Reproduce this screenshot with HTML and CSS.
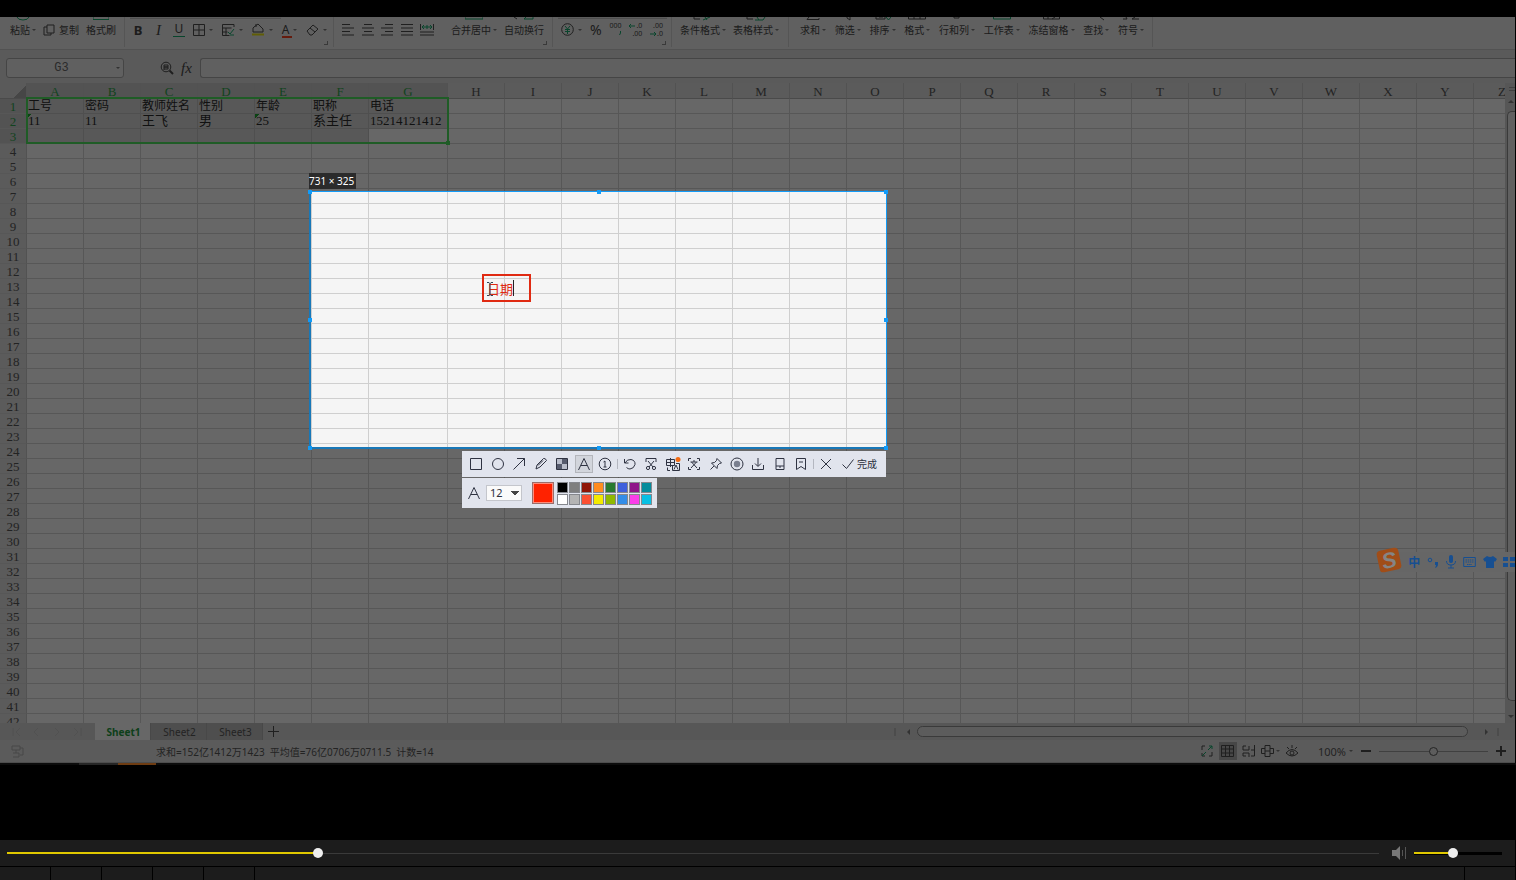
FILE: index.html
```html
<!DOCTYPE html>
<html lang="zh-CN">
<head>
<meta charset="utf-8">
<title>Sheet1</title>
<link rel="stylesheet" href="styles.css">
</head>
<body>
<main class="app">
  <header class="ribbon">
    <div class="group g-clip">
      <button class="tool"><svg class="cut" width="14" height="4"><path d="M1 0q1 3 6 3t6-3" class="gr"/></svg><span class="label caret">粘贴</span></button>
      <button class="tool copy"><svg width="12" height="12"><path d="M4 1h7v8H4zM4 3H1v8h7V9"/></svg><span class="label">复制</span></button>
      <button class="tool"><svg class="cut" width="16" height="4"><path d="M0 0v2.500h16V0" class="gr"/></svg><span class="label">格式刷</span></button>
    </div>
    <div class="group g-font">
      <div class="combo"></div>
      <div class="icons">
        <button class="ic b">B</button>
        <button class="ic i">I</button>
        <button class="ic u">U</button>
        <button class="ic caret" aria-label="边框"><svg width="12" height="12"><path d="M.5.5h11v11H.5zM6 0v12M0 6h12"/></svg></button>
        <button class="ic caret" aria-label="表格样式"><svg width="13" height="12"><path d="M12 3V.500H.5v11h7M.5 4h9M.5 8h5M4 4v7"/><path d="M6 8l2 2 4-5M8 11h4" class="gr"/></svg></button>
        <button class="ic caret" aria-label="填充"><svg width="14" height="13"><path d="M3 4l4-3 5 5v3H2V5zM5 1v3"/><path d="M1 11.500h12" stroke="#e6e010" stroke-width="2"/></svg></button>
        <button class="ic caret a">A</button>
        <button class="ic caret" aria-label="清除"><svg width="13" height="12"><path d="M1 7l6-6 5 4-6 6H4zM4 4l5 4"/></svg></button>
      </div>
      <i class="corner"></i>
    </div>
    <div class="group g-align">
      <div class="icons">
        <button class="ic" aria-label="左对齐"><svg width="12" height="12"><path d="M0 .5h8M0 4h12M0 7.500h8M0 11h12"/></svg></button>
        <button class="ic" aria-label="居中"><svg width="12" height="12"><path d="M2 .5h8M0 4h12M2 7.500h8M0 11h12"/></svg></button>
        <button class="ic" aria-label="右对齐"><svg width="12" height="12"><path d="M4 .5h8M0 4h12M4 7.500h8M0 11h12"/></svg></button>
        <button class="ic" aria-label="两端对齐"><svg width="12" height="12"><path d="M0 .5h12M0 4h12M0 7.500h12M0 11h12"/></svg></button>
        <button class="ic" aria-label="分散对齐"><svg width="14" height="12"><path d="M.5 0v6M13.500 0v6M0 8h14M0 11h14"/><path d="M2 3h10M4 1L2 3l2 2M10 1l2 2-2 2M7 1v4" class="gr"/></svg></button>
      </div>
      <button class="tool"><svg class="cut" width="18" height="4"><path d="M0 0v2h18V0" class="gr"/></svg><span class="label caret">合并居中</span></button>
      <button class="tool"><svg class="cut" width="20" height="4"><path d="M0 0l3 2"/><path d="M10 2h9V0M12 0l-2 2" class="gr"/></svg><span class="label">自动换行</span></button>
      <i class="corner"></i>
    </div>
    <div class="group g-num">
      <div class="combo"></div>
      <div class="icons">
        <button class="ic caret" aria-label="货币"><svg width="13" height="13"><circle cx="6.500" cy="6.500" r="5.800"/><path d="M4 3l2.500 3L9 3M6.500 6v5M4 6.500h5M4 8.500h5" class="gr"/></svg></button>
        <button class="ic pct">%</button>
        <button class="ic dec"><span>000</span><svg width="4" height="7"><path d="M2.500 1v2l-1 2" class="gr"/></svg></button>
        <button class="ic dec"><span class="row"><svg width="6" height="6"><path d="M0 3h6M2 1L0 3l2 2" class="gr"/></svg>.0</span><span>.00</span></button>
        <button class="ic dec"><span>.00</span><span class="row"><svg width="6" height="6"><path d="M0 3h6M4 1l2 2-2 2" class="gr"/></svg>.0</span></button>
      </div>
      <i class="corner"></i>
    </div>
    <div class="group g-style">
      <button class="tool"><svg class="cut" width="20" height="4"><path d="M1 0v2h6"/><path d="M10 3l7-3M12 0l2 3" class="gr"/></svg><span class="label caret">条件格式</span></button>
      <button class="tool"><svg class="cut" width="20" height="4"><path d="M1 0v2h6"/><path d="M9 3h8l2-3M11 0l2 3" class="gr"/></svg><span class="label caret">表格样式</span></button>
    </div>
    <div class="group g-edit">
      <button class="tool"><svg class="cut" width="14" height="4"><path d="M3 0L1 2.500h12V1"/></svg><span class="label caret">求和</span></button>
      <button class="tool"><svg class="cut" width="14" height="4"><path d="M6 0v1l3 2V0"/></svg><span class="label caret">筛选</span></button>
      <button class="tool"><svg class="cut" width="16" height="4"><path d="M1 0v2h9V0M4 0h4"/><path d="M11 0l2.500 3L16 0" class="gr"/></svg><span class="label caret">排序</span></button>
      <button class="tool"><svg class="cut" width="18" height="4"><path d="M.5 0v2h17V0M6 0v2M12 0v2"/></svg><span class="label caret">格式</span></button>
      <button class="tool"><svg class="cut" width="14" height="4"><path d="M4 0v1h5V0"/></svg><span class="label caret">行和列</span></button>
      <button class="tool"><svg class="cut" width="18" height="4"><path d="M.5 0v2h17V0" class="gr"/></svg><span class="label caret">工作表</span></button>
      <button class="tool"><svg class="cut" width="18" height="4"><path d="M.5 0v2h16V0M5 0v2M12 0L9 2"/></svg><span class="label caret">冻结窗格</span></button>
      <button class="tool"><svg class="cut" width="20" height="4"><path d="M14 0l4 3"/></svg><span class="label caret">查找</span></button>
      <button class="tool"><svg class="cut" width="18" height="4"><path d="M1 2h4l-1-2M10 2h7M13 0l-3 2"/></svg><span class="label caret">符号</span></button>
    </div>
  </header>

  <div class="formula">
    <div class="namebox"><input class="name" aria-label="名称框" value="G3"></div>
    <svg class="find" width="14" height="14"><circle cx="6" cy="6" r="4.800"/><path d="M9.500 9.500L13 13" stroke-width="2"/><path d="M4 9V4h4v2H4h4v2H4"/></svg>
    <span class="fx">fx</span>
    <input class="fbar" aria-label="编辑栏">
  </div>

  <div class="sheet">
    <div class="grid">
      <table id="cells"></table>
      <div class="picked"></div>
    </div>
    <div class="vscroll"><span class="split"></span><span class="up"></span><span class="vthumb"></span><span class="down"></span></div>
  </div>

  <nav class="tabs">
    <svg class="navs" width="72" height="10"><path d="M1 1v8M8 1L4 5l4 4M26 1l-4 4 4 4M43 1l4 4-4 4M62 1l4 4-4 4M69 1v8"/></svg>
    <button class="tab on">Sheet1</button><button class="tab">Sheet2</button><button class="tab">Sheet3</button>
    <button class="add" aria-label="新建工作表"><svg width="11" height="11"><path d="M5.500 0v11M0 5.500h11"/></svg></button>
    <div class="hscroll"><i class="bar"></i><i class="lt"></i><span class="hthumb"></span><i class="rt"></i><i class="bar"></i></div>
  </nav>

  <footer class="status">
    <svg class="rec" width="14" height="13"><path d="M1 1h8v4H1zM5 5v3M2 8h6v4H2M9 3h3v7H9"/></svg>
    <span class="sum">求和=152亿1412万1423&nbsp; 平均值=76亿0706万0711.5&nbsp; 计数=14</span>
    <div class="views">
      <button class="view" aria-label="全屏"><svg width="12" height="12"><path d="M1 5V1h3M11 7v4H8M1 8v3h3"/><path d="M7 5l4-4M8 1h3v3M5 7l-4 4" class="gr"/></svg></button>
      <button class="view cur" aria-label="普通"><svg width="13" height="12"><path d="M.5.5h12v11H.5zM0 4h13M0 8h13M4.500 0v12M8.500 0v12"/></svg></button>
      <button class="view" aria-label="分页"><svg width="14" height="12"><path d="M1 1v4h6V1M1 1h3M12.500 0v11H9M1 11V8h6v4M9 5h4M1 11h3"/></svg></button>
      <button class="view caret" aria-label="阅读"><svg width="13" height="12"><path d="M4 .5h5v11H4zM4 3.500H.5v5H4M9 3.500h3.500v5H9M4 6h5"/></svg></button>
      <button class="view" aria-label="护眼"><svg width="14" height="12"><path d="M1 8q6-7 12 0-6 6-12 0M2 2l2 2M7 0v3M12 2l-2 2"/><circle cx="7" cy="8" r="2"/></svg></button>
    </div>
    <div class="zoom">
      <button class="pctz caret">100%</button>
      <button class="pm" aria-label="缩小"><svg width="10" height="10"><path d="M0 5h10" stroke-width="2"/></svg></button>
      <input class="zr" type="range" aria-label="缩放" value="50">
      <button class="pm" aria-label="放大"><svg width="10" height="10"><path d="M5 0v10M0 5h10" stroke-width="2"/></svg></button>
    </div>
  </footer>

  <div class="snip">
    <span class="size">731 × 325</span>
    <i class="h tl"></i><i class="h tc"></i><i class="h tr"></i><i class="h ml"></i><i class="h mr"></i><i class="h bl"></i><i class="h bc"></i><i class="h br"></i>
    <div class="note">
      <input class="note-in" aria-label="文字" value="日期"><i class="blink"></i>
      <svg class="ibeam" width="6" height="14"><path d="M0 .5h2l1 1 1-1h2M3 1v12M0 13.500h2l1-1 1 1h2"/></svg>
    </div>
    <div class="bars">
      <div class="bar1">
        <div class="set s1">
          <button class="sb" aria-label="矩形"><svg width="14" height="14"><path d="M1.500 1.500h11v11h-11z"/></svg></button>
          <button class="sb" aria-label="椭圆"><svg width="14" height="14"><circle cx="7" cy="7" r="5.500"/></svg></button>
          <button class="sb" aria-label="箭头"><svg width="14" height="14"><path d="M1.500 12.500l11-11M5 1.500h7.500V9"/></svg></button>
          <button class="sb" aria-label="画笔"><svg width="14" height="14"><path d="M2 12l1-4 6.500-6.500q2-.5 3 2L6 10zM4 8.500l5-5"/></svg></button>
          <button class="sb" aria-label="马赛克"><svg width="14" height="14"><path d="M2 2h5v5H2zM7 7h5v5H7z" fill="#b9bdca" stroke="none"/><path d="M7 2h5v5H7zM2 7h5v5H2z" fill="#565b6d" stroke="none"/><path d="M1.500 1.500h11v11h-11z"/></svg></button>
          <button class="sb act" aria-label="文字"><svg width="14" height="14"><path d="M1.500 13L7 1.500 12.500 13M4 8.500h6"/></svg></button>
          <button class="sb" aria-label="序号"><svg width="14" height="14"><circle cx="7" cy="7" r="5.800"/><path d="M5.500 5L7 4v6M5.500 10h3"/></svg></button>
        </div>
        <i class="sep"></i>
        <div class="set s2">
          <button class="sb" aria-label="撤销"><svg width="14" height="14"><path d="M1.500 2v4h4M2 6q2-4 6-3.500 4.500 1 4 5-1 4-5 4.500-2 0-3.500-1.500"/></svg></button>
          <button class="sb" aria-label="裁剪"><svg width="14" height="14"><path d="M2 5V1.500h10V5M4 4l5 6M10 4l-5 6"/><circle cx="4" cy="11" r="1.600"/><circle cx="10" cy="11" r="1.600"/></svg></button>
          <button class="sb" aria-label="翻译"><svg width="16" height="15"><path d="M1.500 2.500h8v6h-8zM1.500 5.500h8M5.500 1v9M11 6.500h3.500v7h-7V9M9 12.500l2-4.500 2 4.500M2.500 10.500v3H5"/><circle cx="13" cy="2.500" r="2.500" fill="#f36a10" stroke="none"/></svg></button>
          <button class="sb" aria-label="识别"><svg width="14" height="14"><path d="M1.500 4V1.500H4M10 1.500h2.500V4M1.500 10v2.500H4M10 12.500h2.500V10M3.500 5h7M7 3v2M4 11l5.500-6M10 11L4.500 5"/></svg></button>
          <button class="sb" aria-label="钉住"><svg width="14" height="14"><path d="M8 1.500L12.500 6l-2 .5-2 2-.5 3L2.500 6l3-.5 2-2zM5 9l-3.500 3.500"/></svg></button>
          <button class="sb" aria-label="录制"><svg width="14" height="14"><circle cx="7" cy="7" r="6"/><circle cx="7" cy="7" r="3.200" fill="#7a7f8f" stroke="none"/></svg></button>
          <button class="sb" aria-label="保存"><svg width="14" height="14"><path d="M1.500 8v4.500h11V8M7 1v8M4 6.500l3 3 3-3"/></svg></button>
          <button class="sb" aria-label="手机"><svg width="14" height="14"><path d="M3 1.500h8v11H3zM3 9h8M7 9v2"/></svg></button>
          <button class="sb" aria-label="收藏"><svg width="14" height="14"><path d="M2.500 1.500h9v11L7 9.500l-4.500 3zM5 5h4"/></svg></button>
        </div>
        <i class="sep"></i>
        <button class="sb" aria-label="取消"><svg width="14" height="14"><path d="M2 2l10 10M12 2L2 12"/></svg></button>
        <button class="done"><svg width="14" height="14"><path d="M1.500 7.500l4 4 7-9"/></svg>完成</button>
      </div>
      <div class="bar2">
        <svg class="bigA" width="14" height="14"><path d="M1.500 13L7 1.500 12.500 13M4 8.500h6"/></svg>
        <select class="fs" aria-label="字号"><option>12</option></select>
        <button class="current" aria-label="当前颜色"></button>
        <div class="swatches" id="swatches"></div>
      </div>
    </div>
  </div>

  <div class="ime">
    <svg class="sogou" width="26" height="26"><g transform="rotate(-12 13 13)"><rect x="2" y="2" width="22" height="22" rx="4" fill="#a04d18"/><text x="13" y="21" text-anchor="middle" class="s">S</text></g></svg>
    <span class="zh">中</span>
    <svg width="12" height="12"><circle cx="3" cy="4" r="1.800" fill="none" stroke="#174f91"/><path d="M8 6h3v2q0 3-3 4 1-2 1-3H8z"/></svg>
    <svg width="12" height="14"><rect x="4" y="0" width="4" height="8" rx="2"/><path d="M1.500 6q0 4 4.500 4t4.500-4M6 10v3M3 13h6" fill="none" stroke="#174f91"/></svg>
    <svg width="13" height="12"><path d="M.7 1.500h11.600v9H.7z" fill="none" stroke="#174f91"/><path d="M2.500 4h8M2.500 6h8M4 8.500h5" stroke="#174f91" stroke-dasharray="1.500 .7"/></svg>
    <svg width="14" height="12"><path d="M4 0q3 2 6 0l4 3-2 3-1-1v7H3V5L2 6 0 3z"/></svg>
    <svg width="12" height="12"><path d="M0 1h5v4H0zM7 1h5v4H7zM0 7h5v4H0zM7 7h5v4H7z"/></svg>
  </div>
</main>

<div class="taskbar"><i class="t1"></i><i class="t2"></i></div>
<section class="player">
  <input class="seek" type="range" step="any" value="22.5" aria-label="进度">
  <svg class="vol" width="15" height="14"><path d="M0 4h4l4-4v14l-4-4H0z" fill="#777" stroke="none"/><path d="M10.500 4v6M13.500 1v12" stroke="#555"/></svg>
  <input class="loud" type="range" step="any" value="44" aria-label="音量">
</section>
<div class="dock"><i></i><i></i><i></i><i></i><i></i><i class="wide"></i><i class="end"></i></div>
<script src="grid.js"></script>
</body>
</html>
```
FILE: grid.js
```js
const data = [
  ["工号", "密码", "教师姓名", "性别", "年龄", "职称", "电话"],
  ["11", "11", "王飞", "男", "25", "系主任", "15214121412"],
  ["", "", "", "", "", "", ""]
];
const letters = "ABCDEFGHIJKLMNOPQRSTUVWXYZ".split("");
let html = '<colgroup><col class="c-head">' +
  letters.map(l => `<col class="${l === "G" ? "c-wide" : "c-std"}">`).join("") + "</colgroup>";
html += '<thead><tr><th class="all"></th>' +
  letters.map((l, i) => `<th class="${i < 7 ? "sel" : ""}">${l}</th>`).join("") + "</tr></thead><tbody>";
for (let r = 0; r < 42; r++) {
  html += `<tr><th class="${r < 3 ? "sel" : ""}">${r + 1}</th>`;
  for (let c = 0; c < 26; c++) {
    const cls = [];
    if (r < 3 && c < 7 && !(r === 2 && c === 6)) cls.push("in");
    if (r === 1 && (c === 0 || c === 4)) cls.push("flag");
    html += `<td class="${cls.join(" ")}">${(data[r] && data[r][c]) || ""}</td>`;
  }
  html += "</tr>";
}
document.getElementById("cells").innerHTML = html + "</tbody>";

const colors = ["#000000", "#7f7f7f", "#8f1406", "#ff8c1f", "#28792f", "#3f5fdc", "#8f1489", "#058c9c",
  "#ffffff", "#b4b4b4", "#fb4f32", "#f4ea00", "#8fb900", "#338de8", "#fb3ee9", "#07c0e4"];
document.getElementById("swatches").innerHTML =
  colors.map(c => `<button class="sw" aria-label="${c}" style="background:${c}"></button>`).join("");
```
FILE: styles.css
```css
* { box-sizing: border-box; }
html, body { height: 100%; }
body {
  margin: 0; padding-top: 17px; background: #000; overflow: hidden;
  display: flex; flex-direction: column;
  font-family: "Noto Sans", "Noto Sans CJK SC", sans-serif; font-size: 10px; color: #444;
}
button, input, select { font: inherit; color: inherit; border: 0; padding: 0; margin: 0; background: none; }
svg { display: block; flex: none; fill: none; stroke: #4a4a4a; stroke-width: 1; }
.gr { stroke: #16a56a; }

.app {
  position: relative; flex: 1 1 0; min-height: 0; overflow: hidden; margin-right: 1px;
  display: flex; flex-direction: column; background: #d6d6d6;
}

/* ribbon */
.ribbon { flex: none; display: flex; height: 33px; background: #e4e4e4; border-bottom: 1px solid #c4c4c4; }
.group { position: relative; display: flex; align-items: flex-start; justify-content: space-between; border-right: 1px solid #cacaca; height: 30px; flex: none; }
.g-clip { width: 125px; padding: 0 8px 0 10px; }
.g-font { width: 209px; padding: 0 6px 0 7px; }
.g-align { width: 219px; padding: 0 8px; }
.g-num { width: 119px; padding: 0 8px; }
.g-style { width: 117px; padding: 0 9px 0 8px; }
.g-edit { width: 364px; padding: 0 8px 0 11px; }
.tool { display: flex; flex-direction: column; align-items: center; font-family: "Noto Sans CJK SC", sans-serif; font-size: 10px; line-height: 18px; }
.tool .cut { height: 4px; }
.copy { flex-direction: row; gap: 4px; padding-top: 4px; }
.label { white-space: nowrap; }
.caret { display: flex; align-items: center; gap: 3px; }
.caret::after { content: ""; border: 2px solid transparent; border-top-color: #777; border-bottom: 0; }
.label.caret { gap: 2px; }
.icons { display: flex; align-items: center; justify-content: space-between; height: 25px; flex: 1; }
.g-align .icons { flex: none; width: 92px; margin-right: 10px; }
.ic { display: flex; align-items: center; justify-content: center; min-width: 12px; height: 16px; line-height: 14px; }
.ic.caret { gap: 4px; }
.b { font-weight: 700; font-size: 13px; }
.i { font-family: "Liberation Serif", serif; font-style: italic; font-size: 15px; }
.u { font-size: 12px; border-bottom: 1px solid #16a56a; height: 14px; }
.a { font-size: 12px; background: linear-gradient(#f0401f, #f0401f) 0 100% / 10px 2px no-repeat; }
.pct { font-size: 14px; }
.dec { flex-direction: column; align-items: flex-end; font-size: 7px; line-height: 8px; }
.dec .row { display: flex; align-items: center; gap: 1px; }
.combo { position: absolute; top: 0; left: 5px; right: 52px; height: 2px; background: #d9d9d9; border-bottom: 1px solid #bbb; }
.g-num .combo { right: 4px; }
.corner { position: absolute; right: 5px; bottom: 2px; width: 4px; height: 4px; border-right: 1px solid #888; border-bottom: 1px solid #888; }

/* formula row */
.formula { flex: none; display: flex; align-items: center; height: 33px; padding: 2px 0 0 6px; }
.namebox { width: 118px; height: 20px; border: 1px solid #a5a5a5; border-radius: 3px; background: #e4e4e4; display: flex; align-items: center; padding-right: 3px; }
.namebox::after { content: ""; border: 2px solid transparent; border-top-color: #777; border-bottom: 0; }
.name { flex: 1; min-width: 0; text-align: center; font-family: "Liberation Mono", monospace; font-size: 12px; color: #666; }
.find { margin-left: 36px; }
.fx { width: 26px; padding-left: 7px; font: italic 15px/16px "Liberation Serif", serif; color: #444; }
.fbar { flex: 1; height: 20px; border: 1px solid #a5a5a5; border-right: 0; border-radius: 3px 0 0 3px; background: #e4e4e4; }

/* sheet */
.sheet { flex: 1 1 0; min-height: 0; display: flex; }
.grid { position: relative; flex: 1; min-width: 0; overflow: hidden; }
table { table-layout: fixed; border-collapse: separate; border-spacing: 0; width: 0; font-family: "Liberation Serif", "Noto Sans CJK SC", serif; }
.c-head { width: 27px; }
.c-std { width: 57px; }
.c-wide { width: 79px; }
th, td { height: 15px; padding: 0; line-height: 14px; font-weight: 400; white-space: nowrap; overflow: hidden; border-right: 1px solid #cfcfcf; border-bottom: 1px solid #cfcfcf; }
td { background: #f5f5f5; padding-left: 1px; font-size: 13px; color: #2a2a2a; text-align: left; }
tbody tr:first-child td { font-size: 12px; }
th { background: #d8d8d8; padding-top: 2px; line-height: 12px; font-size: 13px; color: #555; border-right-color: #c4c4c4; }
thead th { height: 16px; line-height: 13px; border-bottom-color: #b0b0b0; }
th.sel { background: #c6c6c6; color: #2fa04a; }
td.in { background: #d2d2d2; border-color: #bcbcbc; }
.flag { background-image: linear-gradient(135deg, #1ba030 3px, transparent 3px) !important; }
.all { background: linear-gradient(135deg, #d6d6d6 70%, #a8a8a8 70%); }
.picked { position: absolute; left: 26px; top: 14px; width: 423px; height: 47px; border: 2px solid #4bdc5c; }
.picked::after { content: ""; position: absolute; right: -3px; bottom: -3px; width: 4px; height: 4px; background: #4bdc5c; }
.vscroll { width: 10px; background: #ccc; display: flex; flex-direction: column; align-items: flex-end; padding-bottom: 5px; }
.split { width: 6px; height: 4px; margin-top: 4px; border-top: 1px solid #999; border-bottom: 1px solid #999; }
.up, .down { margin: 9px 1px 8px; border: 3px solid transparent; border-top-width: 0; border-bottom-color: #777; }
.down { border-width: 3px 3px 0; border-color: #777 transparent transparent; margin: 14px 1px 0; }
.vthumb { flex: 1; width: 8px; border: 1px solid #8a8a8a; border-right: 0; border-radius: 5px 0 0 5px; background: #e4e4e4; }

/* sheet tabs */
.tabs { flex: none; display: flex; align-items: center; height: 17px; background: #cfcfcf; }
.navs { margin: 0 11px 0 12px; stroke: #c0c0c0; }
.tab { height: 17px; width: 56px; padding-left: 2px; font-size: 10px; background: #bababa; border-right: 1px solid #adadad; color: #555; }
.tab.on { background: #f5f5f5; color: #23963f; font-weight: 700; }
.add { margin: 0 auto 0 5px; }
.hscroll { width: 41%; display: flex; align-items: center; gap: 7px; padding-right: 16px; }
.hthumb { flex: 1; height: 11px; border: 1px solid #8a8a8a; border-radius: 6px; background: #dcdcdc; }
.lt, .rt { border: 3px solid transparent; border-left-width: 0; border-right-color: #777; margin-left: 4px; }
.rt { border-width: 3px 0 3px 3px; border-color: transparent transparent transparent #777; margin: 0 2px 0 10px; }
.bar { width: 2px; height: 8px; background: #b5b5b5; }

/* status bar */
.status { flex: none; display: flex; align-items: center; height: 23px; background: #d9d9d9; border-bottom: 1px solid #b8b8b8; color: #555; }
.rec { margin: 0 10px 0 11px; stroke: #aaa; }
.sum { margin-left: 121px; margin-right: auto; font-size: 10px; white-space: nowrap; }
.views { display: flex; gap: 3px; margin-right: 17px; }
.view { min-width: 18px; height: 18px; display: flex; align-items: center; justify-content: center; }
.view.cur { background: #aaa; }
.view.caret { gap: 2px; }
.zoom { display: flex; align-items: center; gap: 8px; padding-right: 9px; }
.pctz { font-size: 11px; }
.zr { appearance: none; width: 109px; height: 10px; background: linear-gradient(#999, #999) 0 50% / 100% 1px no-repeat; }
.zr::-webkit-slider-thumb { appearance: none; width: 9px; height: 9px; border: 1px solid #555; border-radius: 50%; background: #ddd; }

/* snipping overlay */
.snip { position: absolute; left: 309px; top: 174px; width: 578px; height: 258px; border: 1px solid #129bf8; border-bottom: 2px solid #1878b8; border-left: 2px solid #1878b8; box-shadow: 0 0 0 3000px rgba(0, 0, 0, .58); }
.size { position: absolute; left: -2px; top: -19px; height: 16px; padding-right: 2px; background: #2b2b2b; color: #fff; font-size: 10px; line-height: 16px; white-space: nowrap; }
.h { position: absolute; width: 4px; height: 4px; background: #129bf8; }
.tl, .tc, .tr { top: -2px; }
.bl, .bc, .br { bottom: -3px; }
.tl, .ml, .bl { left: -3px; }
.tr, .mr, .br { right: -2px; }
.tc, .bc { left: 50%; margin-left: -2px; }
.ml, .mr { top: 50%; margin-top: -2px; }
.note { position: absolute; left: 171px; top: 82px; width: 49px; height: 28px; border: 2px solid #e02a12; display: flex; align-items: center; padding-left: 3px; }
.note-in { width: 26px; height: 20px; font: 13px/18px "Noto Sans CJK SC", sans-serif; color: #e02a12; }
.blink { width: 1px; height: 16px; background: #222; }
.ibeam { position: absolute; left: 3px; top: 6px; stroke: #345; }
.bars { position: absolute; right: 0; top: 259px; width: 424px; display: flex; flex-direction: column; align-items: flex-start; gap: 1px; color: #2c303c; }
.bars svg { stroke: #2f3342; }
.bar1 { width: 100%; height: 26px; background: #e1e4ed; display: flex; align-items: center; padding: 0 9px 0 5px; }
.set { display: flex; justify-content: space-between; }
.s1 { width: 147px; }
.s2 { width: 189px; }
.sb { width: 18px; height: 18px; display: flex; align-items: center; justify-content: center; }
.sb.act { background: #d2d5dc; border: 1px solid #b4b6bc; }
.sep { width: 1px; height: 10px; margin: 0 3px; background: #b4b7c0; }
.done { margin-left: auto; display: flex; align-items: center; gap: 2px; font: 10px/16px "Noto Sans CJK SC", sans-serif; white-space: nowrap; }
.bar2 { height: 30px; padding: 0 5px; background: #e1e4ed; display: flex; align-items: center; }
.fs { appearance: none; width: 36px; height: 16px; margin: 0 10px 0 5px; padding-left: 3px; border: 1px solid #c4c6cc; font-size: 11px; line-height: 14px; background-color: #fafafa; background-repeat: no-repeat; background-size: 4px 5px; background-position: 28px 5px, 24px 5px;
  background-image: linear-gradient(to bottom right, #444 50%, transparent 50%), linear-gradient(to bottom left, #444 50%, transparent 50%); }
.current { width: 22px; height: 22px; background: #ff2200; border: 1px solid #9a6d6a; box-shadow: inset 0 0 0 1px #ff8c7a; margin-right: 3px; }
.swatches { display: grid; grid-template-columns: repeat(8, 11px); grid-auto-rows: 11px; gap: 1px; }
.sw { border: 1px solid #85878d; }

/* input method bar */
.ime { position: absolute; right: 0; top: 535px; width: 138px; height: 20px; display: flex; align-items: center; justify-content: space-between;
  background: linear-gradient(#666, #666) 10px 0 no-repeat; color: #174f91; }
.ime svg { fill: #174f91; stroke: none; }
.ime .sogou { margin-top: -4px; margin-left: -1px; }
.s { font: italic 700 22px "Liberation Sans", sans-serif; fill: #858585; }
.zh { font: 700 12px/16px "Noto Sans CJK SC", sans-serif; }

/* video player */
.taskbar { flex: none; height: 2px; margin-bottom: 75px; padding-left: 79px; display: flex; background: #0c0c0c; }
.t1 { width: 39px; height: 2px; background: #262626; }
.t2 { width: 38px; height: 2px; background: #6e3c12; }
.player { flex: none; height: 26px; margin-right: 1px; display: flex; align-items: center; padding: 0 13px 0 7px; background: #1c1c1c; }
.seek, .loud { appearance: none; height: 12px; }
.seek { flex: 1; min-width: 0; background: linear-gradient(#e0c800, #e0c800) 0 50% / 22.6% 2px no-repeat, linear-gradient(#3a3a3a, #3a3a3a) 0 50% / 100% 1px no-repeat; }
.loud { width: 88px; background: linear-gradient(#e0c800, #e0c800) 0 50% / 44% 2px no-repeat, linear-gradient(#000, #000) 0 50% / 100% 3px no-repeat; }
.seek::-webkit-slider-thumb, .loud::-webkit-slider-thumb { appearance: none; width: 10px; height: 10px; border-radius: 50%; background: #eee; }
.vol { margin: 0 7px 0 13px; }
.dock { flex: none; height: 13px; margin: 1px 1px 0 0; display: flex; gap: 1px; }
.dock i { width: 50px; background: #1c1c1c; }
.dock .wide { flex: 1; }
```
